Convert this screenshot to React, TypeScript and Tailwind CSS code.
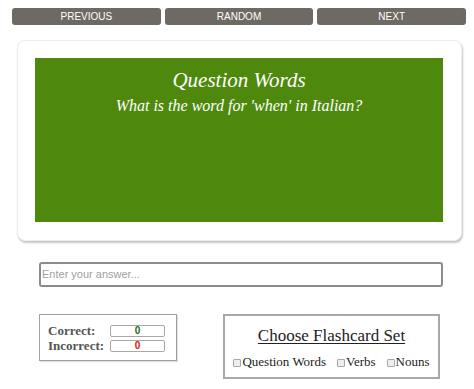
import React from "react";

const serif = { fontFamily: '"Liberation Serif", "Times New Roman", serif' };
const sans = { fontFamily: '"Liberation Sans", Arial, sans-serif' };

function Btn({ label }: { label: string }) {
  return (
    <button
      className="flex-1 h-[17px] rounded-[3px] bg-[#6e6a63] text-white text-[10px] leading-[17px] text-center"
      style={sans}
    >
      {label}
    </button>
  );
}

function Check({ label }: { label: string }) {
  return (
    <label className="flex items-center">
      <span className="inline-block w-[8px] h-[8px] border border-[#a8a8a8] bg-[#eee] rounded-[1px] mr-[1px] mt-[1px]" />
      <span>{label}</span>
    </label>
  );
}

export default function App() {
  return (
    <div className="w-[474px] h-[389px] bg-white overflow-hidden pt-[8px]">
      <div className="flex gap-[4px] ml-[12px] mr-[8px]">
        <Btn label="PREVIOUS" />
        <Btn label="RANDOM" />
        <Btn label="NEXT" />
      </div>

      <div className="mt-[15px] ml-[17px] mr-[12px] h-[201px] rounded-[8px] border border-[#ececec] bg-white shadow-[1px_2px_2px_rgba(0,0,0,0.22)] pl-[17px] pr-[18px] pt-[17px]">
        <div className="h-[164px] bg-[#4e890e] text-white text-center italic pt-[10px]" style={serif}>
          <div className="text-[21px] leading-[24px]">Question Words</div>
          <div className="text-[16px] leading-[20px] mt-[4px]">What is the word for 'when' in Italian?</div>
        </div>
      </div>

      <div className="mt-[21px] ml-[39px] w-[404px] h-[25px] border-2 border-[#8c8c8c] rounded-[3px] flex items-center pl-[1px]">
        <span className="text-[11px] text-[#a0a0a0]" style={sans}>Enter your answer...</span>
      </div>

      <div className="flex mt-[27px] ml-[39px] items-start">
        <div className="w-[138px] h-[47px] border border-[#a0a0a0] shadow-[1px_1px_1px_rgba(0,0,0,0.12)] pl-[8px] pt-[8px]" style={serif}>
          <div className="flex items-center h-[15px]">
            <span className="w-[62px] font-bold text-[13px] text-[#555]">Correct:</span>
            <span className="w-[55px] h-[12px] border border-[#a8a8a8] rounded-[2px] text-[10px] leading-[10px] text-center font-bold text-[#1a6b1a]" style={sans}>0</span>
          </div>
          <div className="flex items-center h-[15px]">
            <span className="w-[62px] font-bold text-[13px] text-[#555]">Incorrect:</span>
            <span className="w-[55px] h-[12px] border border-[#a8a8a8] rounded-[2px] text-[10px] leading-[10px] text-center font-bold text-[#e01010]" style={sans}>0</span>
          </div>
        </div>

        <div className="ml-[46px] w-[217px] h-[65px] border-2 border-[#a8a8a8] text-[#222] flex flex-col items-center pt-[10px]" style={serif}>
          <div className="text-[17px] leading-[20px] underline underline-offset-[2px]">Choose Flashcard Set</div>
          <div className="flex gap-[11px] text-[13px] leading-[16px] mt-[8px]">
            <Check label="Question Words" />
            <Check label="Verbs" />
            <Check label="Nouns" />
          </div>
        </div>
      </div>
    </div>
  );
}
